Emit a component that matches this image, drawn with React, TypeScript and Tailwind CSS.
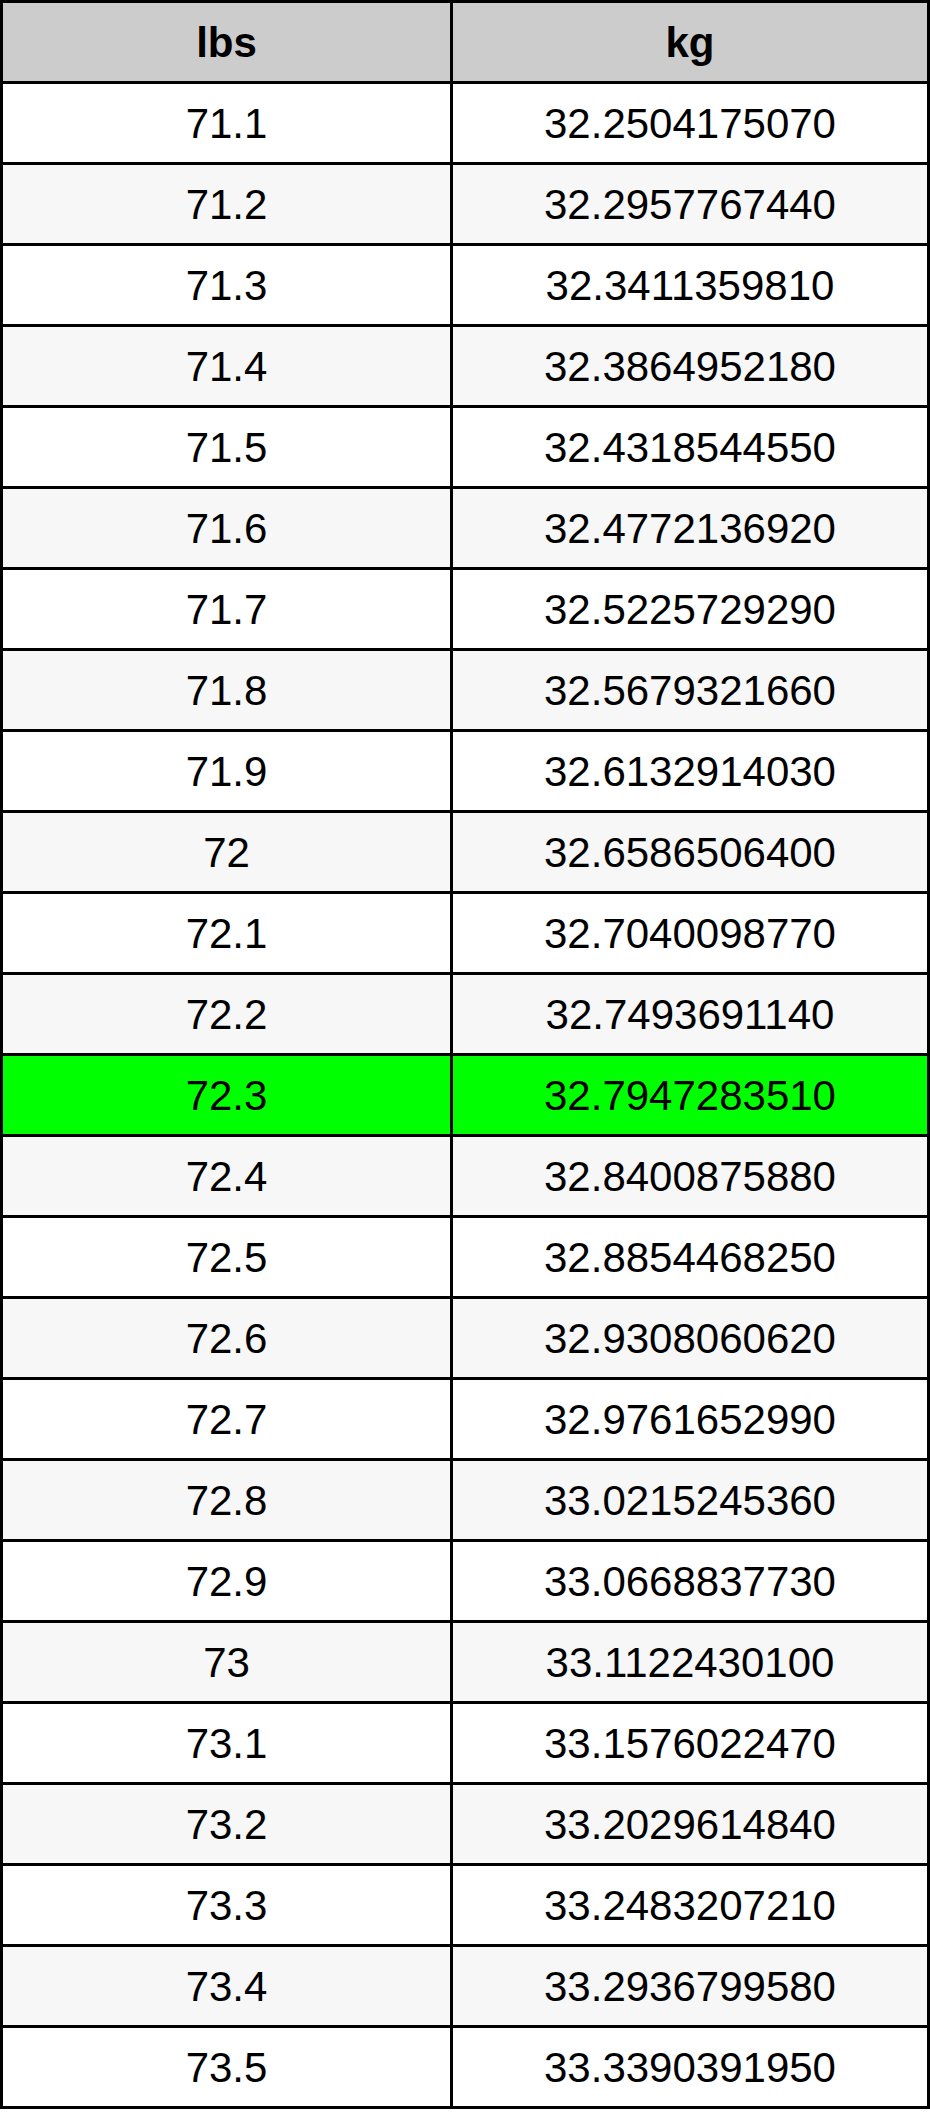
const rows: [string, string][] = [
  ["71.1", "32.2504175070"],
  ["71.2", "32.2957767440"],
  ["71.3", "32.3411359810"],
  ["71.4", "32.3864952180"],
  ["71.5", "32.4318544550"],
  ["71.6", "32.4772136920"],
  ["71.7", "32.5225729290"],
  ["71.8", "32.5679321660"],
  ["71.9", "32.6132914030"],
  ["72", "32.6586506400"],
  ["72.1", "32.7040098770"],
  ["72.2", "32.7493691140"],
  ["72.3", "32.7947283510"],
  ["72.4", "32.8400875880"],
  ["72.5", "32.8854468250"],
  ["72.6", "32.9308060620"],
  ["72.7", "32.9761652990"],
  ["72.8", "33.0215245360"],
  ["72.9", "33.0668837730"],
  ["73", "33.1122430100"],
  ["73.1", "33.1576022470"],
  ["73.2", "33.2029614840"],
  ["73.3", "33.2483207210"],
  ["73.4", "33.2936799580"],
  ["73.5", "33.3390391950"],
];

export default function App() {
  return (
    <div className="w-[930px] bg-white" style={{ fontFamily: '"Liberation Sans", Arial, sans-serif' }}>
      <div className="grid grid-cols-[447px_474px] gap-[3px] bg-black p-[3px] text-[42px] text-black">
        {/* header */}
        <div className="h-[78px] flex items-center justify-center bg-[#cccccc] font-bold">lbs</div>
        <div className="h-[78px] flex items-center justify-center bg-[#cccccc] font-bold">kg</div>

        {rows.map(([lbs, kg], i) => {
          const bg = lbs === "72.3" ? "bg-[#00ff00]" : i % 2 === 1 ? "bg-[#f7f7f7]" : "bg-white";
          return [
            <div key={lbs + "a"} className={`h-[78px] flex items-center justify-center ${bg}`}>
              {lbs}
            </div>,
            <div key={lbs + "b"} className={`h-[78px] flex items-center justify-center ${bg}`}>
              {kg}
            </div>,
          ];
        })}
      </div>
    </div>
  );
}
